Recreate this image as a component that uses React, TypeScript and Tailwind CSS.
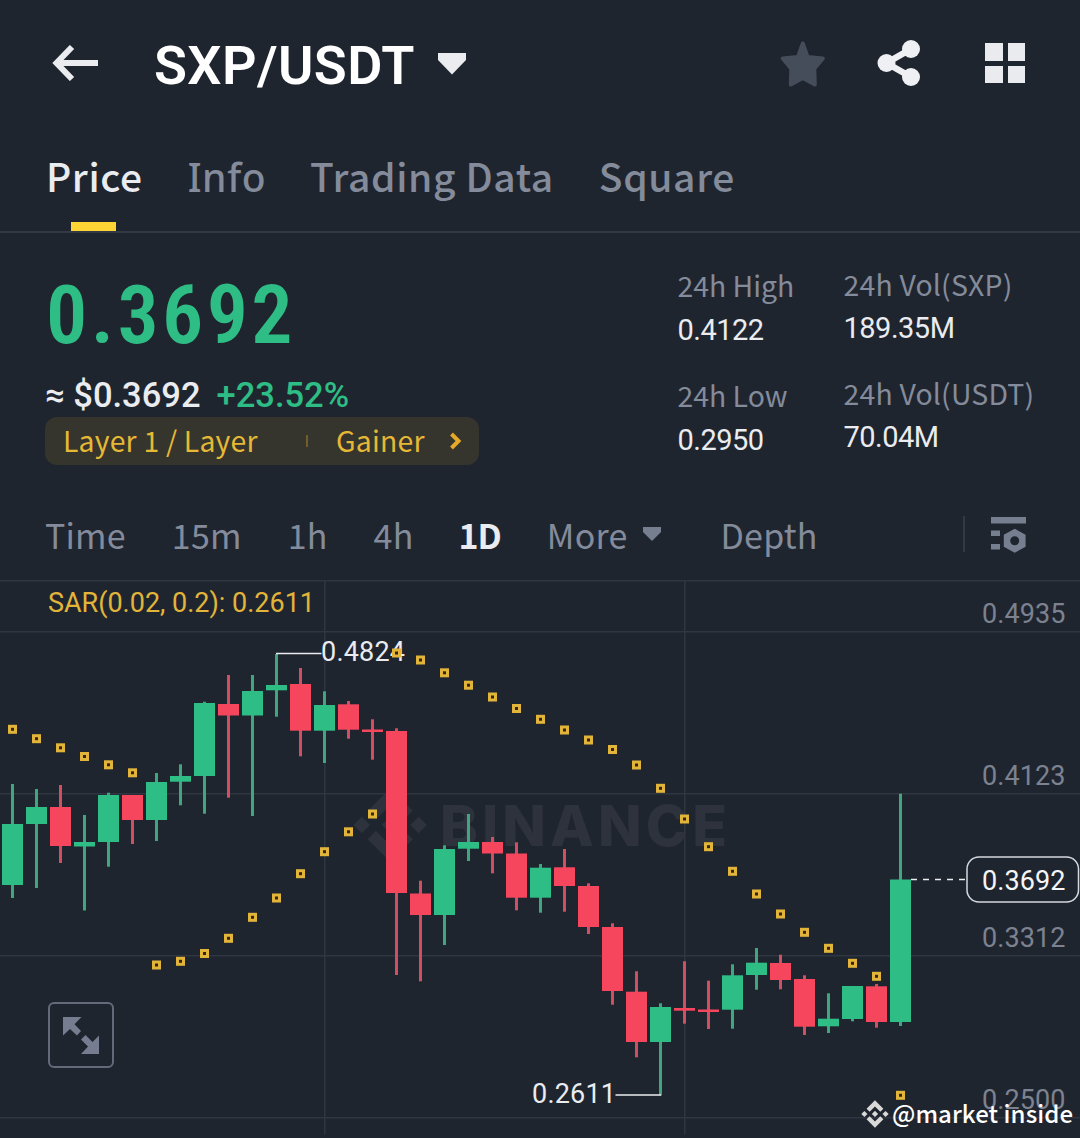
import { clsx } from 'clsx';

const SANS = "font-['Noto_Sans_CJK_SC','Noto_Sans',sans-serif]";
const DIGITS = 'font-[Roboto,sans-serif]';

const TABS = ['Price', 'Info', 'Trading Data', 'Square'];
const INTERVALS = ['Time', '15m', '1h', '4h', '1D', 'More', 'Depth'];

type Candle = { up: boolean; high: number; top: number; bottom: number; low: number };

const c = (up: number, high: number, top: number, bottom: number, low: number): Candle => ({
  up: up === 1, high, top, bottom, low,
});

// y positions on the chart canvas, one entry per day
const CANDLES: Candle[] = [
  c(1, 784, 824, 885, 898),
  c(1, 789, 807, 824, 888),
  c(0, 785, 807, 846, 863),
  c(1, 815, 842, 846.5, 910.5),
  c(1, 792.7, 795, 842, 866.7),
  c(0, 795, 795, 820, 844),
  c(1, 773, 782, 820, 841),
  c(1, 764.3, 776, 781.7, 805.3),
  c(1, 701.7, 703, 776, 813.7),
  c(0, 675, 704, 715.5, 797.7),
  c(1, 675, 691, 715.5, 816),
  c(1, 654, 685, 690.3, 716.7),
  c(0, 668, 684, 730.7, 756.3),
  c(1, 691.3, 705, 730.7, 763),
  c(0, 701, 704.3, 729.7, 738.7),
  c(0, 719.3, 729.5, 732, 759.7),
  c(0, 728.3, 731, 893, 975),
  c(0, 880.7, 893.5, 915, 981.3),
  c(1, 845.3, 849, 915, 945),
  c(1, 814, 842, 848.7, 861),
  c(0, 837, 842, 853.5, 873.3),
  c(0, 842.3, 853.5, 897.7, 910.3),
  c(1, 864, 867.7, 897.7, 912.7),
  c(0, 849, 867.3, 886, 911.7),
  c(0, 883.3, 886, 927, 934),
  c(0, 923.3, 927, 991, 1004.7),
  c(0, 971.3, 991.7, 1042, 1057.3),
  c(1, 1003.3, 1007, 1042, 1095.5),
  c(0, 961.3, 1008, 1010.7, 1023.7),
  c(0, 980.7, 1009.5, 1012, 1029),
  c(1, 964.3, 975.3, 1009.7, 1028.7),
  c(1, 948, 962.7, 975, 989.7),
  c(0, 954.7, 963, 980, 989.3),
  c(0, 975.3, 979, 1026.7, 1035),
  c(1, 993.3, 1018.7, 1026.3, 1033),
  c(1, 986, 986, 1019, 1021.3),
  c(0, 984, 986.3, 1022, 1027.7),
  c(1, 793.7, 879.5, 1022, 1026),
];

const SAR = [
  729.3, 738.7, 747.8, 756.5, 764.8, 772.8, 965, 961.3, 953.5, 938.3, 917.3, 898, 873.7, 851.7, 831.8, 814,
  653, 660, 672.8, 685.2, 697, 708.5, 719.3, 730, 740, 749.5, 765, 788.3, 819, 846.7, 871.3, 894,
  914, 932.3, 948.3, 963.3, 976.3, 1095.3,
];

const AXIS: [string, number][] = [
  ['0.4935', 623], ['0.4123', 785], ['0.3312', 947], ['0.2500', 1109],
];

const xOf = (i: number) => 12.5 + i * 24;

function BinanceMark() {
  return (
    <>
      <path d="M38.7 53.2 63.3 28.6 87.9 53.2 102.2 38.9 63.3 0 24.4 38.9Z" />
      <path d="M0 63.3 14.3 49 28.6 63.3 14.3 77.6Z" />
      <path d="M38.7 73.4 63.3 98 87.9 73.4 102.2 87.7 63.3 126.6 24.4 87.7Z" />
      <path d="M98 63.3 112.3 49 126.6 63.3 112.3 77.6Z" />
      <path d="M77.8 63.3 63.3 48.8 48.8 63.3 63.3 77.8Z" />
    </>
  );
}

function Header() {
  return (
    <header className="flex h-[130px] items-start pt-[36px] pr-[55px] pl-[52px]">
      <svg width="46" height="36" viewBox="0 0 46 36" className="mt-[9px] shrink-0" fill="none" stroke="#eaecef" strokeWidth="6">
        <path d="M46 18H5M20 2 4.5 18 20 34" />
      </svg>
      <h1 className="ml-[56px] font-[Roboto,sans-serif] text-[54px] leading-[60px] font-semibold tracking-[0.4px] text-white">
        SXP/USDT
      </h1>
      <svg width="28" height="22" viewBox="0 0 28 22" className="mt-[17px] ml-[23px] shrink-0" fill="#eaecef">
        <path d="M0 0H28V7L14 21.5 0 7Z" />
      </svg>
      <div className="ml-auto flex items-start">
        <svg width="46" height="48" viewBox="0 0 46 48" className="mt-[4px]" fill="#454d5b" stroke="#454d5b" strokeWidth="4" strokeLinejoin="round">
          <path d="M22.8 3.5 27.5 17 42.8 18.5 34.3 28.6 34.8 44.5 22.8 38 10.8 44.5 11.3 28.6 2.8 18.5 18 17Z" />
        </svg>
        <svg width="44" height="46" viewBox="0 0 44 46" className="mt-[4px] ml-[51px]" fill="#eff0f3" stroke="#eff0f3">
          <circle cx="9.5" cy="23" r="9" stroke="none" />
          <circle cx="34" cy="9" r="9" stroke="none" />
          <circle cx="34" cy="37" r="9" stroke="none" />
          <path d="M34 9 9.5 23 34 37" fill="none" strokeWidth="6.5" />
        </svg>
        <div className="mt-[7px] ml-[64px] grid grid-cols-2 gap-[5px]">
          {[0, 1, 2, 3].map((n) => <span key={n} className="size-[17.5px] bg-[#eaebef]" />)}
        </div>
      </div>
    </header>
  );
}

function Tabs() {
  return (
    <nav className="flex h-[103px] gap-[45px] border-b-2 border-[#333944] pt-[21px] pl-[46px]">
      {TABS.map((tab, i) => (
        <div
          key={tab}
          className={clsx(
            'relative h-[80px] text-[39px] font-medium tracking-[0.6px]',
            tab === 'Info' ? "-mr-px font-['Noto_Sans',sans-serif] leading-[51px]" : [SANS, 'leading-[48px]'],
            i === 0 ? 'text-[#eaecef]' : 'text-[#848b9b]',
          )}
        >
          {tab}
          {i === 0 && <span className="absolute bottom-0 left-[25px] h-[9px] w-[45px] bg-[#fcd535]" />}
        </div>
      ))}
    </nav>
  );
}

function Stat({ label, value, tight }: { label: string; value: string; tight?: boolean }) {
  return (
    <div className={tight ? 'space-y-[10px]' : 'space-y-[11px]'}>
      <div className={clsx(SANS, 'text-[28.4px] leading-[34px] text-[#848b9b]', tight && 'tracking-[0.2px]')}>{label}</div>
      <div className={clsx(DIGITS, 'text-[29px] leading-[34px] tracking-[-0.5px] text-[#eaecef]')}>{value}</div>
    </div>
  );
}

function Summary() {
  return (
    <section className="flex h-[262px] whitespace-nowrap">
      <div className="w-[677.5px] pt-[40px] pl-[45px]">
        <div className="ml-px font-['Roboto_Condensed',Roboto,sans-serif] text-[82px] leading-[84px] font-semibold tracking-[3.4px] text-[#2ebd85]">0.3692</div>
        <div className={clsx(DIGITS, 'mt-[18px] flex gap-[16px] text-[34.5px] leading-[40px] font-medium')}>
          <span className="text-[#eaecef]">≈ $0.3692</span>
          <span className="text-[#2ebd85]">+23.52%</span>
        </div>
        <div className={clsx(SANS, 'mt-[2px] flex h-[48px] w-[434px] items-center rounded-[12px] bg-[#35342d] pl-[18px] text-[28.4px] leading-[44px] tracking-[0.2px] text-[#e5b936]')}>
          <span className="-mt-[3px] w-[243px]">Layer 1 / Layer</span>
          <span className="h-[12px] w-[2px] bg-[#725c2c]" />
          <span className="-mt-[3px] ml-[28px]">Gainer</span>
          <svg width="14" height="18" viewBox="0 0 14 18" className="ml-[24px]" fill="none" stroke="#e5a92a" strokeWidth="4">
            <path d="M2.5 2 9.5 9 2.5 16" />
          </svg>
        </div>
      </div>
      <div className="w-[166px] space-y-[31px] pt-[35px]">
        <Stat label="24h High" value="0.4122" />
        <Stat label="24h Low" value="0.2950" />
      </div>
      <div className="space-y-[31px] pt-[34px]">
        <Stat tight label="24h Vol(SXP)" value="189.35M" />
        <Stat tight label="24h Vol(USDT)" value="70.04M" />
      </div>
    </section>
  );
}

function Intervals() {
  return (
    <div className={clsx(SANS, 'flex h-[85px] gap-[46px] pt-[20px] pl-[45px] text-[34px] leading-[40px] tracking-[0.2px] text-[#848b9b]')}>
      {INTERVALS.map((label) => (
        <div
          key={label}
          className={clsx(
            'flex',
            label === '1D' && '-ml-px tracking-[-1px] font-bold text-[#eaecef]',
            label === 'More' && 'mr-[14px]',
          )}
        >
          {label}
          {label === 'More' && (
            <svg width="18" height="14" viewBox="0 0 18 14" className="mt-[12px] ml-[15px]" fill="#767f90">
              <path d="M0 0H18V5L9 14 0 5Z" />
            </svg>
          )}
        </div>
      ))}
      <div className="mr-[54px] ml-auto flex gap-[26px] pt-px">
        <span className="h-[36px] w-[2px] bg-[#333a47]" />
        <svg width="35" height="37" viewBox="0 0 35 37" className="mt-[1px]" fill="#767f90">
          <path d="M0 0H35V6.5H0ZM0 13.5H9V19H0ZM0 27H9V32.5H0Z" />
          <path fillRule="evenodd" d="M23.7 11.8 34.6 17.8V29.8L23.7 35.8 12.8 29.8V17.8ZM23.7 19.3A4.5 4.5 0 1 0 23.7 28.3 4.5 4.5 0 1 0 23.7 19.3Z" />
        </svg>
      </div>
    </div>
  );
}

function Chart() {
  return (
    <div className="relative h-[558px]">
      <svg width="1080" height="558" viewBox="0 580 1080 558" className="block font-[Roboto,sans-serif] text-[27px]">
        <g fill="#303641">
          <rect x="0" y="579.5" width="1080" height="2" />
          {[631, 793, 955, 1117].map((y) => <rect key={y} x="0" y={y} width="1080" height="1.5" />)}
          {[324, 684].map((x) => <rect key={x} x={x} y="581" width="1.5" height="553" />)}
        </g>

        {/* watermark */}
        <g fill="#2e323d">
          <g transform="translate(353.5 788.3) scale(0.58)"><BinanceMark /></g>
          <text x="440" y="845.5" textLength="287" className="font-[Inter,sans-serif] text-[57px] font-extrabold">BINANCE</text>
        </g>

        {AXIS.map(([label, y]) => (
          <text key={label} x="982" y={y} textLength="83.5" fill="#7c828f">{label}</text>
        ))}

        {CANDLES.map((d, i) => (
          <g key={i}>
            <rect x={xOf(i) - 1.5} y={d.high} width="3" height={d.low - d.high} fill={d.up ? '#3fa67d' : '#d04f63'} />
            <rect x={xOf(i) - 10.5} y={d.top} width="21" height={d.bottom - d.top} fill={d.up ? '#2ebd85' : '#f6465d'} />
          </g>
        ))}

        <g fill="#eaecef">
          <path d="M276 653.5H321.5M615.5 1095H661" stroke="#eaecef" strokeWidth="1.5" />
          <text x="321" y="661" textLength="84">0.4824</text>
          <text x="532" y="1103" textLength="84">0.2611</text>
        </g>

        {SAR.map((y, i) => (
          <rect key={i} x={xOf(i) - 3} y={y - 3} width="6" height="6" fill="#33260f" stroke="#e2b53a" strokeWidth="3" />
        ))}
        <text x="48" y="612" textLength="267" fill="#e2b53a">SAR(0.02, 0.2): 0.2611</text>

        <path d="M911 879.5H966" stroke="#eaecef" strokeWidth="1.5" strokeDasharray="6 6" />
        <rect x="967" y="857" width="111.5" height="45" rx="12" fill="#1f252f" stroke="#d5d8dd" strokeWidth="1.5" />
        <text x="982" y="890" textLength="83.5" fill="#f5f5f7">0.3692</text>

        {/* author tag */}
        <g transform="translate(861.3 1100.3) scale(0.216)" fill="#d9d9d9"><BinanceMark /></g>
        <text x="892" y="1122.5" textLength="181" fill="#fff" className="font-['Noto_Sans_CJK_SC',sans-serif] text-[24px] font-medium">
          @market inside
        </text>
      </svg>

      <button className="absolute top-[422px] left-[48px] flex size-[66px] items-center justify-center rounded-[6px] border-2 border-[#636a79]">
        <svg width="36" height="37" viewBox="0 0 36 37" fill="#767d90">
          <path d="M0 0H18.5L11.5 7.3 18 14 14 18.5 7 12 0 18.5Z" />
          <path d="M36 37H18L25 29.5 18 22.5 22.5 18 29.5 25 36 18.5Z" />
        </svg>
      </button>
    </div>
  );
}

export default function App() {
  return (
    <div className="h-[1138px] w-[1080px] overflow-hidden bg-[#1f252f]">
      <Header />
      <Tabs />
      <Summary />
      <Intervals />
      <Chart />
    </div>
  );
}
